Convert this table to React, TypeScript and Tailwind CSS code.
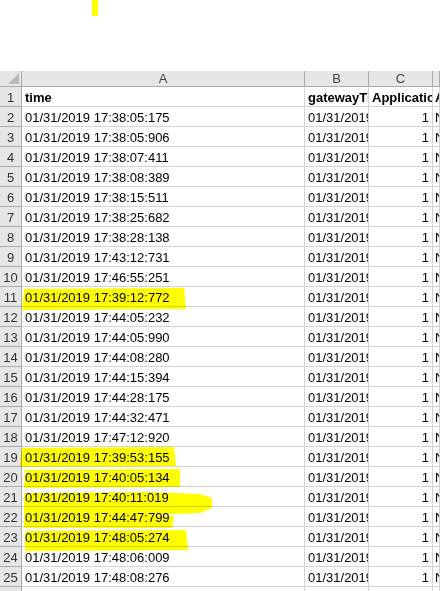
import React from "react";

const times = [
  "17:38:05:175", "17:38:05:906", "17:38:07:411", "17:38:08:389", "17:38:15:511",
  "17:38:25:682", "17:38:28:138", "17:43:12:731", "17:46:55:251", "17:39:12:772",
  "17:44:05:232", "17:44:05:990", "17:44:08:280", "17:44:15:394", "17:44:28:175",
  "17:44:32:471", "17:47:12:920", "17:39:53:155", "17:40:05:134", "17:40:11:019",
  "17:44:47:799", "17:48:05:274", "17:48:06:009", "17:48:08:276", "17:48:09:101",
];

const cell = "h-[20px] border-r border-b border-[#d4d4d4] overflow-hidden whitespace-nowrap leading-[22px]";
const head = "h-[16px] border-r border-b border-[#ababab] bg-[#e6e6e6] text-center leading-[16px] text-[#444]";
const rowHead = "h-[20px] border-r border-b border-[#ababab] bg-[#e6e6e6] text-center leading-[22px] text-[#333]";

export default function App() {
  return (
    <div className="relative h-[591px] w-[440px] overflow-hidden bg-white text-[13px] text-black" style={{ fontFamily: "'Liberation Sans', Arial, sans-serif" }}>
      <div className="h-[71px]" />
      <div className="grid grid-cols-[22px_283px_64px_64px_1fr]">
        <div className={`${head} relative`}>
          <svg className="absolute bottom-[2px] right-[2px]" width="11" height="11" viewBox="0 0 11 11">
            <path d="M11 0 L11 11 L0 11 Z" fill="#b9b9b9" />
          </svg>
        </div>
        <div className={head}>A</div>
        <div className={head}>B</div>
        <div className={head}>C</div>
        <div className={`${head} pl-[2px] text-left`}></div>

        <div className={rowHead}>1</div>
        <div className={`${cell} pl-[3px] font-bold`}>time</div>
        <div className={`${cell} pl-[3px] font-bold`}>gatewayTime</div>
        <div className={`${cell} pl-[3px] font-bold`}>ApplicationId</div>
        <div className={`${cell} pl-[2px] font-bold`}>A</div>

        {times.map((t, i) => (
          <React.Fragment key={i}>
            <div className={rowHead}>{i + 2}</div>
            <div className={`${cell} pl-[3px]`}>01/31/2019 {t}</div>
            <div className={`${cell} pl-[3px]`}>01/31/2019</div>
            <div className={`${cell} pr-[3px] text-right`}>1</div>
            <div className={`${cell} pl-[2px]`}>N</div>
          </React.Fragment>
        ))}
      </div>

      <svg className="pointer-events-none absolute inset-0 mix-blend-multiply" width="440" height="591" viewBox="0 0 440 591">
        <rect x="92" y="0" width="6" height="16" fill="#ffff00" />
        <path d="M24 289 L184 288 L186 309 L22 310 Z" fill="#ffff00" />
        <path d="M22 448 L174 447 L176 466 L20 467 Z" fill="#ffff00" />
        <path d="M25 470 L180 469 L180 487 L24 488 Z" fill="#ffff00" />
        <path d="M24 493 L150 492 L200 494 L212 498 L212 508 L200 513 L150 515 L24 514 Z" fill="#ffff00" />
        <path d="M24 514 L150 515 L174 516 L172 528 L24 528 Z" fill="#ffff00" />
        <path d="M25 531 L186 530 L188 550 L25 551 Z" fill="#ffff00" />
      </svg>
    </div>
  );
}
